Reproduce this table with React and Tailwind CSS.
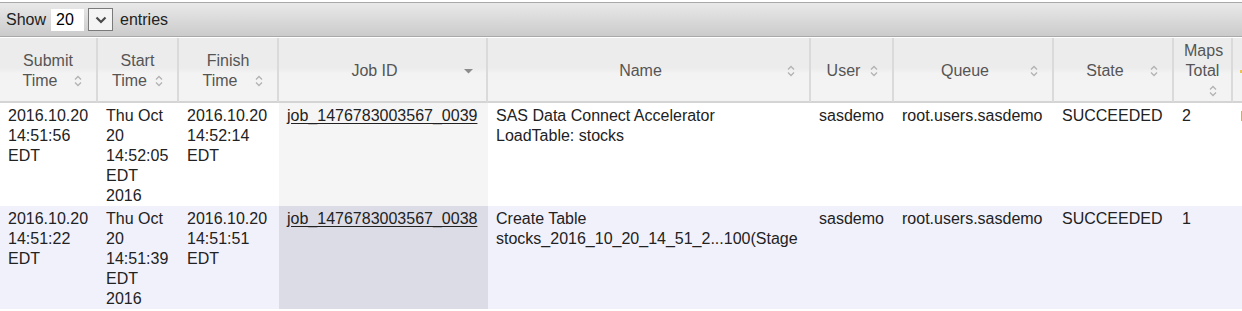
import React from 'react';

// Jobs table header/rows for the history page.
const COLS = [
  { key: 'submit', label: 'Submit Time', w: 'w-[98px]' },
  { key: 'start', label: 'Start Time', w: 'w-[81px]' },
  { key: 'finish', label: 'Finish Time', w: 'w-[100px]' },
  { key: 'id', label: 'Job ID', w: 'w-[209px]', sorted: true },
  { key: 'name', label: 'Name', w: 'w-[323px]' },
  { key: 'user', label: 'User', w: 'w-[83px]' },
  { key: 'queue', label: 'Queue', w: 'w-[160px]' },
  { key: 'state', label: 'State', w: 'w-[120px]' },
  { key: 'maps', label: 'Maps Total', w: 'w-[59px]' },
  { key: 'done', label: '', w: 'w-[90px]', last: true },
];

const ROWS = [
  {
    submit: ['2016.10.20', '14:51:56', 'EDT'],
    start: ['Thu Oct', '20', '14:52:05', 'EDT', '2016'],
    finish: ['2016.10.20', '14:52:14', 'EDT'],
    id: 'job_1476783003567_0039',
    name: ['SAS Data Connect Accelerator', 'LoadTable: stocks'],
    user: 'sasdemo',
    queue: 'root.users.sasdemo',
    state: 'SUCCEEDED',
    maps: '2',
    mark: true,
  },
  {
    submit: ['2016.10.20', '14:51:22', 'EDT'],
    start: ['Thu Oct', '20', '14:51:39', 'EDT', '2016'],
    finish: ['2016.10.20', '14:51:51', 'EDT'],
    id: 'job_1476783003567_0038',
    name: ['Create Table', 'stocks_2016_10_20_14_51_2...100(Stage'],
    user: 'sasdemo',
    queue: 'root.users.sasdemo',
    state: 'SUCCEEDED',
    maps: '1',
    mark: false,
  },
];

function SortBoth() {
  return (
    <svg width="8" height="12" viewBox="0 0 8 12" fill="none" stroke="#b2b2b2" strokeWidth="1.3">
      <path d="M1 4.5 L4 1.5 L7 4.5" />
      <path d="M1 7.5 L4 10.5 L7 7.5" />
    </svg>
  );
}

function SortDesc() {
  return (
    <svg width="9" height="5" viewBox="0 0 9 5">
      <path d="M0 0 L9 0 L4.5 4.5 Z" fill="#8c8c8c" />
    </svg>
  );
}

function Lines({ lines }) {
  return lines.map((l, i) => (
    <React.Fragment key={i}>
      {i > 0 && <br />}
      {l}
    </React.Fragment>
  ));
}

export default function App() {
  return (
    <div
      className="w-[1242px] h-[311px] overflow-hidden bg-white pt-[2px] text-[16px] text-[#222]"
      style={{ fontFamily: '"Liberation Sans", Arial, sans-serif' }}
    >
      {/* ── Length selector bar ─────────────────────────────────────── */}
      <div className="h-[35px] flex items-center gap-[5px] pl-[6px] border-t border-b border-[#a9a9a9] bg-gradient-to-b from-[#e9e9e9] to-[#cbcbcb]">
        <span>Show</span>
        <div className="flex items-center gap-[4px]">
          <span className="bg-white h-[22px] w-[33px] pl-[5px] leading-[22px] text-black">20</span>
          <span className="h-[23px] w-[25px] border border-[#7a7a7a] bg-[#f4f4f4] flex items-center justify-center">
            <svg width="12" height="8" viewBox="0 0 12 8" fill="none" stroke="#4a4a4a" strokeWidth="2.2">
              <path d="M1.5 1.5 L6 6 L10.5 1.5" />
            </svg>
          </span>
        </div>
        <span className="ml-[2px]">entries</span>
      </div>

      {/* ── Jobs table ──────────────────────────────────────────────── */}
      <table className="table-fixed border-separate border-spacing-0 w-[1323px] mt-px">
        <colgroup>
          {COLS.map((c) => (
            <col key={c.key} className={c.w} />
          ))}
        </colgroup>
        <thead>
          <tr>
            {COLS.map((c) => (
              <th
                key={c.key}
                className={`h-[65px] pt-[3px] pb-0 px-[10px] font-normal text-[#555] leading-5 text-center align-middle border-b-2 border-b-[#d4d4d4] bg-[linear-gradient(to_bottom,#ececec_0%,#ececec_48%,#f3f3f3_56%,#f3f3f3_100%)] ${
                  c.last ? 'border-r-0' : 'border-r-2 border-r-[#dadada]'
                }`}
              >
                {c.last ? (
                  <div className="w-[3px] h-[3px] ml-[-3px] bg-[#e8c15a]" />
                ) : (
                  // sort icon floats right, so the line it lands on is centred in the narrower box
                  <div className="flow-root text-center">
                    {c.label}
                    <span className="float-right w-[16px] h-[20px] flex items-center justify-center">
                      {c.sorted ? <SortDesc /> : <SortBoth />}
                    </span>
                  </div>
                )}
              </th>
            ))}
          </tr>
        </thead>
        <tbody>
          {ROWS.map((r, i) => {
            const odd = i % 2 === 1;
            const base = odd ? 'bg-[#f1f1fb]' : 'bg-white';
            const cell = `align-top pt-[3px] pb-0 pl-[8px] pr-[6px] leading-5 ${base}`;
            return (
              <tr key={r.id} className="h-[103px]">
                <td className={cell}><Lines lines={r.submit} /></td>
                <td className={cell}><Lines lines={r.start} /></td>
                <td className={cell}><Lines lines={r.finish} /></td>
                <td className={`align-top pt-[3px] pl-[8px] leading-5 ${odd ? 'bg-[#dcdce7]' : 'bg-[#f5f5f5]'}`}>
                  <a href="#" className="underline text-[#222] underline-offset-2">{r.id}</a>
                </td>
                <td className={cell}><Lines lines={r.name} /></td>
                <td className={cell}>{r.user}</td>
                <td className={cell}>{r.queue}</td>
                <td className={cell}>{r.state}</td>
                <td className={cell}>{r.maps}</td>
                <td className={cell}>
                  {r.mark && <div className="w-[2px] h-[10px] mt-[5px] bg-[#e6a93c]" />}
                </td>
              </tr>
            );
          })}
        </tbody>
      </table>
    </div>
  );
}
